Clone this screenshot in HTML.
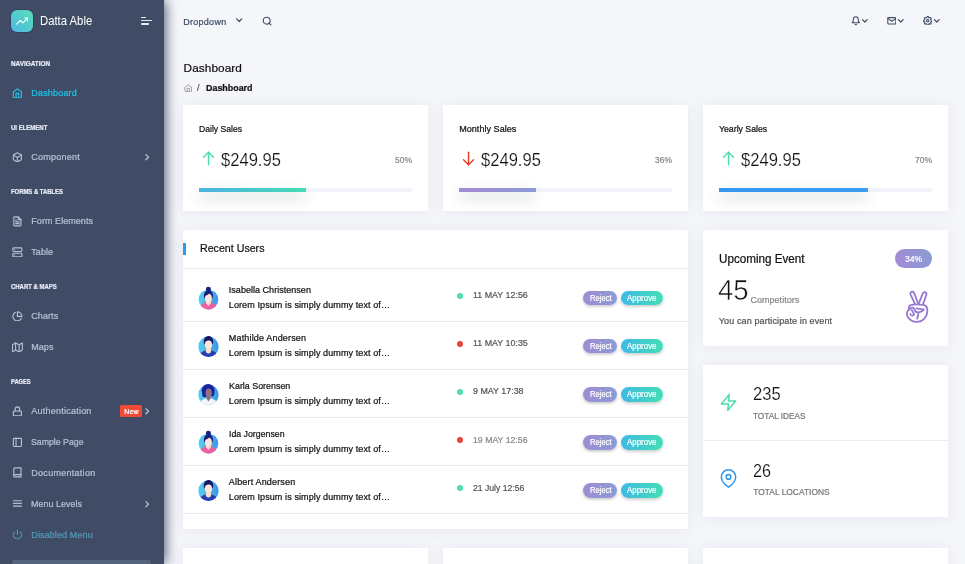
<!DOCTYPE html>
<html lang="en"><head><meta charset="utf-8"><title>Datta Able - Dashboard</title>
<style>
*{margin:0;padding:0;box-sizing:border-box}
html,body{width:965px;height:564px;overflow:hidden;background:#f5f6fa;font-family:"Liberation Sans", sans-serif;}
#app{position:relative;width:965px;height:564px;overflow:hidden;background:#f5f6fa;will-change:transform}
#app div,#app svg,#app span{position:absolute}
.t{white-space:nowrap;display:block;transform-origin:0 50%;-webkit-text-stroke:0.22px}
#side{left:0;top:0;width:164.4px;height:564px;background:#404c66;box-shadow:0.6px 0 12.4px 0 #3f4d67}
.card{background:#fff;box-shadow:0 0.6px 12.4px 0 rgba(69,80,100,.08)}
</style></head><body>
<div id="app">
<div id="side"></div>
<div class="sb" style="left:11.00px;top:9.50px;width:21.90px;height:22.40px;border-radius:6.2px;background:linear-gradient(-135deg,#5addb4 0%,#4cb9e8 100%);box-shadow:0 0 0 0.8px rgba(40,40,70,.45);"></div>
<div class="sb" style="left:141.00px;top:16.70px;width:4.80px;height:1.60px;background:#e4e8f2;border-radius:.8px;"></div>
<div class="sb" style="left:141.00px;top:19.90px;width:11.20px;height:1.60px;background:#e4e8f2;border-radius:.8px;"></div>
<div class="sb" style="left:141.00px;top:23.10px;width:8.20px;height:1.60px;background:#e4e8f2;border-radius:.8px;"></div>
<div class="sb" style="left:120.00px;top:405.30px;width:22.40px;height:11.70px;background:#ee4a38;border-radius:1.6px;"></div>
<div class="sb" style="left:11.50px;top:560.10px;width:139.50px;height:20.00px;background:#56637c;border-radius:3px;"></div>
<div class="card" style="left:183.26px;top:104.60px;width:244.74px;height:106.40px;"></div>
<div class="pl" style="left:199.16px;top:187.70px;width:213.20px;height:4.30px;background:#f2f4f9;"></div>
<div class="pl" style="left:199.16px;top:187.70px;width:106.60px;height:4.30px;background:linear-gradient(90deg,#4db2e3,#45dbb4);box-shadow:0 6.2px 12.4px rgba(69,90,100,.3);"></div>
<div class="card" style="left:443.10px;top:104.60px;width:244.74px;height:106.40px;"></div>
<div class="pl" style="left:459.00px;top:187.70px;width:213.20px;height:4.30px;background:#f2f4f9;"></div>
<div class="pl" style="left:459.00px;top:187.70px;width:76.75px;height:4.30px;background:linear-gradient(90deg,#a38ad6,#8c99d7);box-shadow:0 6.2px 12.4px rgba(69,90,100,.3);"></div>
<div class="card" style="left:703.10px;top:104.60px;width:244.74px;height:106.40px;"></div>
<div class="pl" style="left:719.00px;top:187.70px;width:213.20px;height:4.30px;background:#f2f4f9;"></div>
<div class="pl" style="left:719.00px;top:187.70px;width:149.24px;height:4.30px;background:linear-gradient(90deg,#3498ef,#3a9df0);box-shadow:0 6.2px 12.4px rgba(69,90,100,.3);"></div>
<div class="card" style="left:183.26px;top:229.70px;width:504.74px;height:299.60px;"></div>
<div class="pl" style="left:183.46px;top:243.00px;width:2.40px;height:11.80px;background:#2b9df0;"></div>
<div class="pl" style="left:183.26px;top:267.80px;width:504.74px;height:0.70px;background:#e8eaef;"></div>
<div class="pl" style="left:457.30px;top:292.55px;width:6.10px;height:6.10px;background:#52dcb0;border-radius:50%;"></div>
<div class="pl" style="left:583.40px;top:290.55px;width:33.50px;height:14.90px;border-radius:8px;background:linear-gradient(90deg,#9f8cd4,#8c9cd4);box-shadow:0 1.5px 3px rgba(0,0,0,.22);"></div>
<div class="pl" style="left:620.70px;top:290.55px;width:42.10px;height:14.90px;border-radius:8px;background:linear-gradient(90deg,#3fb9e3,#45deb4);box-shadow:0 1.5px 3px rgba(0,0,0,.22);"></div>
<div class="pl" style="left:183.26px;top:321.00px;width:504.74px;height:0.70px;background:#e8eaef;"></div>
<div class="pl" style="left:457.30px;top:340.60px;width:6.10px;height:6.10px;background:#e5433a;border-radius:50%;"></div>
<div class="pl" style="left:583.40px;top:338.60px;width:33.50px;height:14.90px;border-radius:8px;background:linear-gradient(90deg,#9f8cd4,#8c9cd4);box-shadow:0 1.5px 3px rgba(0,0,0,.22);"></div>
<div class="pl" style="left:620.70px;top:338.60px;width:42.10px;height:14.90px;border-radius:8px;background:linear-gradient(90deg,#3fb9e3,#45deb4);box-shadow:0 1.5px 3px rgba(0,0,0,.22);"></div>
<div class="pl" style="left:183.26px;top:369.05px;width:504.74px;height:0.70px;background:#e8eaef;"></div>
<div class="pl" style="left:457.30px;top:388.65px;width:6.10px;height:6.10px;background:#52dcb0;border-radius:50%;"></div>
<div class="pl" style="left:583.40px;top:386.65px;width:33.50px;height:14.90px;border-radius:8px;background:linear-gradient(90deg,#9f8cd4,#8c9cd4);box-shadow:0 1.5px 3px rgba(0,0,0,.22);"></div>
<div class="pl" style="left:620.70px;top:386.65px;width:42.10px;height:14.90px;border-radius:8px;background:linear-gradient(90deg,#3fb9e3,#45deb4);box-shadow:0 1.5px 3px rgba(0,0,0,.22);"></div>
<div class="pl" style="left:183.26px;top:417.10px;width:504.74px;height:0.70px;background:#e8eaef;"></div>
<div class="pl" style="left:457.30px;top:436.70px;width:6.10px;height:6.10px;background:#e5433a;border-radius:50%;"></div>
<div class="pl" style="left:583.40px;top:434.70px;width:33.50px;height:14.90px;border-radius:8px;background:linear-gradient(90deg,#9f8cd4,#8c9cd4);box-shadow:0 1.5px 3px rgba(0,0,0,.22);"></div>
<div class="pl" style="left:620.70px;top:434.70px;width:42.10px;height:14.90px;border-radius:8px;background:linear-gradient(90deg,#3fb9e3,#45deb4);box-shadow:0 1.5px 3px rgba(0,0,0,.22);"></div>
<div class="pl" style="left:183.26px;top:465.15px;width:504.74px;height:0.70px;background:#e8eaef;"></div>
<div class="pl" style="left:457.30px;top:484.75px;width:6.10px;height:6.10px;background:#52dcb0;border-radius:50%;"></div>
<div class="pl" style="left:583.40px;top:482.75px;width:33.50px;height:14.90px;border-radius:8px;background:linear-gradient(90deg,#9f8cd4,#8c9cd4);box-shadow:0 1.5px 3px rgba(0,0,0,.22);"></div>
<div class="pl" style="left:620.70px;top:482.75px;width:42.10px;height:14.90px;border-radius:8px;background:linear-gradient(90deg,#3fb9e3,#45deb4);box-shadow:0 1.5px 3px rgba(0,0,0,.22);"></div>
<div class="pl" style="left:183.26px;top:513.20px;width:504.74px;height:0.70px;background:#e8eaef;"></div>
<div class="card" style="left:703.10px;top:229.70px;width:244.74px;height:116.20px;"></div>
<div class="pl" style="left:894.50px;top:249.00px;width:37.20px;height:18.80px;border-radius:10px;background:linear-gradient(90deg,#a28ad4,#8c9cd4);"></div>
<div class="card" style="left:703.10px;top:364.80px;width:244.74px;height:152.20px;"></div>
<div class="pl" style="left:703.10px;top:440.30px;width:244.74px;height:0.70px;background:#eceef1;"></div>
<div class="card" style="left:183.26px;top:547.70px;width:244.74px;height:40.00px;"></div>
<div class="card" style="left:443.10px;top:547.70px;width:244.74px;height:40.00px;"></div>
<div class="card" style="left:703.10px;top:547.70px;width:244.74px;height:40.00px;"></div>
<svg class="i" style="left:196.15px;top:285.25px" width="24.9" height="24.9" viewBox="0 0 40 40"><defs><linearGradient id="bg0" x1="0" x2="1"><stop offset="0" stop-color="#56d0ee"/><stop offset="1" stop-color="#3f96e5"/></linearGradient><clipPath id="cp0"><circle cx="20" cy="23.4" r="15.8"/></clipPath></defs><circle cx="20" cy="23.4" r="15.8" fill="url(#bg0)"/><g clip-path="url(#cp0)"><ellipse cx="20" cy="38.8" rx="14.8" ry="11.4" fill="#ee5fa3"/><path d="M16.2 25.500h7.600v4l-3.800 4.400l-3.800-4.400z" fill="#fbdccb"/></g><circle cx="20" cy="6.800" r="4" fill="#1b1f7a"/><path d="M13.200 20.500c-1.600-7.400 1.800-11.800 6.800-11.800s8.400 4.400 6.800 11.800l-2 1.500h-9.600z" fill="#1b1f7a"/><ellipse cx="20" cy="20.800" rx="5.500" ry="7" fill="#fde6d8"/><path d="M14 17.500c3.500-.5 6.500-2 8-4.500c1 2 2.500 3.500 4.500 4.500c0-5-2.500-7.500-6.500-7.500s-6.500 3-6 7.500z" fill="#1b1f7a"/></svg>
<svg class="i" style="left:196.15px;top:333.30px" width="24.9" height="24.9" viewBox="0 0 40 40"><defs><linearGradient id="bg1" x1="0" x2="1"><stop offset="0" stop-color="#56d0ee"/><stop offset="1" stop-color="#3f96e5"/></linearGradient><clipPath id="cp1"><circle cx="20" cy="22" r="16.4"/></clipPath></defs><circle cx="20" cy="22" r="16.4" fill="url(#bg1)"/><g clip-path="url(#cp1)"><ellipse cx="20" cy="39" rx="15.500" ry="11.600" fill="#2a3fb0"/><path d="M15.800 25h8.400v3.600a4.200 4.200 0 0 1-8.400 0z" fill="#fbdccb"/></g><path d="M12.800 17.500c-1.500-8 2.500-12.500 7.200-12.500s8.700 4 7.200 12.500l-1.500 1h-11.400z" fill="#171a6b"/><ellipse cx="20" cy="18.600" rx="5.900" ry="7.700" fill="#fde6d8"/><path d="M13.800 15c3-3 9-4.500 12.400 0c.3-5.500-2.200-8.500-6.200-8.500s-6.700 3-6.200 8.500z" fill="#171a6b"/></svg>
<svg class="i" style="left:196.15px;top:381.35px" width="24.9" height="24.9" viewBox="0 0 40 40"><defs><linearGradient id="bg2" x1="0" x2="1"><stop offset="0" stop-color="#56d0ee"/><stop offset="1" stop-color="#3f96e5"/></linearGradient><clipPath id="cp2"><circle cx="20" cy="22" r="16.4"/></clipPath></defs><circle cx="20" cy="22" r="16.4" fill="url(#bg2)"/><g clip-path="url(#cp2)"><ellipse cx="20" cy="39" rx="15" ry="11.600" fill="#f3f5f9"/><path d="M16.800 24h6.400v4l-3.200 5l-3.200-5z" fill="#8a6f7d"/></g><ellipse cx="19.500" cy="14.800" rx="10.500" ry="9.800" fill="#1b22a0"/><ellipse cx="14.200" cy="21" rx="4.200" ry="5.200" fill="#1b22a0"/><ellipse cx="25.800" cy="19.500" rx="3.600" ry="5.200" fill="#1b22a0"/><ellipse cx="20.300" cy="19.400" rx="5" ry="7.200" fill="#8f7382"/></svg>
<svg class="i" style="left:196.15px;top:429.40px" width="24.9" height="24.9" viewBox="0 0 40 40"><defs><linearGradient id="bg3" x1="0" x2="1"><stop offset="0" stop-color="#56d0ee"/><stop offset="1" stop-color="#3f96e5"/></linearGradient><clipPath id="cp3"><circle cx="20" cy="23.4" r="15.8"/></clipPath></defs><circle cx="20" cy="23.4" r="15.8" fill="url(#bg3)"/><g clip-path="url(#cp3)"><ellipse cx="20" cy="38.8" rx="14.8" ry="11.4" fill="#ee5fa3"/><path d="M16.2 25.500h7.600v4l-3.800 4.400l-3.800-4.400z" fill="#fbdccb"/></g><circle cx="20" cy="6.800" r="4" fill="#1b1f7a"/><path d="M13.200 20.500c-1.600-7.400 1.800-11.800 6.800-11.800s8.400 4.400 6.800 11.800l-2 1.500h-9.600z" fill="#1b1f7a"/><ellipse cx="20" cy="20.800" rx="5.500" ry="7" fill="#fde6d8"/><path d="M14 17.500c3.500-.5 6.500-2 8-4.500c1 2 2.500 3.500 4.500 4.500c0-5-2.500-7.500-6.500-7.500s-6.500 3-6 7.500z" fill="#1b1f7a"/></svg>
<svg class="i" style="left:196.15px;top:477.45px" width="24.9" height="24.9" viewBox="0 0 40 40"><defs><linearGradient id="bg4" x1="0" x2="1"><stop offset="0" stop-color="#56d0ee"/><stop offset="1" stop-color="#3f96e5"/></linearGradient><clipPath id="cp4"><circle cx="20" cy="22" r="16.4"/></clipPath></defs><circle cx="20" cy="22" r="16.4" fill="url(#bg4)"/><g clip-path="url(#cp4)"><ellipse cx="20" cy="39" rx="15.500" ry="11.600" fill="#2a3fb0"/><path d="M15.800 25h8.400v3.600a4.200 4.200 0 0 1-8.400 0z" fill="#fbdccb"/></g><path d="M12.800 17.500c-1.500-8 2.500-12.500 7.200-12.500s8.700 4 7.200 12.500l-1.500 1h-11.400z" fill="#171a6b"/><ellipse cx="20" cy="18.600" rx="5.900" ry="7.700" fill="#fde6d8"/><path d="M13.800 15c3-3 9-4.500 12.400 0c.3-5.500-2.200-8.500-6.200-8.500s-6.700 3-6.200 8.500z" fill="#171a6b"/></svg>
<svg class="i" style="left:16.30px;top:14.50px;" width="12.2" height="12.2" viewBox="0 0 24 24" fill="none" stroke="#fff" stroke-width="2.1" stroke-linecap="round" stroke-linejoin="round"><polyline points="23 6 13.5 15.5 8.5 10.5 1 18"/><polyline points="17 6 23 6 23 12"/></svg>
<svg class="i" style="left:11.90px;top:87.50px;" width="10.8" height="10.8" viewBox="0 0 24 24" fill="none" stroke="#1dc4e9" stroke-width="2.5" stroke-linecap="round" stroke-linejoin="round"><path d="M3 9l9-7 9 7v11a2 2 0 0 1-2 2H5a2 2 0 0 1-2-2z"/><polyline points="9 22 9 12 15 12 15 22"/></svg>
<svg class="i" style="left:11.90px;top:151.50px;" width="10.8" height="10.8" viewBox="0 0 24 24" fill="none" stroke="#b4c0d7" stroke-width="2.5" stroke-linecap="round" stroke-linejoin="round"><path d="M21 16V8a2 2 0 0 0-1-1.73l-7-4a2 2 0 0 0-2 0l-7 4A2 2 0 0 0 3 8v8a2 2 0 0 0 1 1.73l7 4a2 2 0 0 0 2 0l7-4A2 2 0 0 0 21 16z"/><polyline points="3.27 6.96 12 12.01 20.73 6.96"/><line x1="12" y1="22.08" x2="12" y2="12"/></svg>
<svg class="i" style="left:141.90px;top:151.90px;" width="10.4" height="10.4" viewBox="0 0 24 24" fill="none" stroke="#b4c0d7" stroke-width="3" stroke-linecap="round" stroke-linejoin="round"><polyline points="9 18 15 12 9 6"/></svg>
<svg class="i" style="left:11.90px;top:215.80px;" width="10.8" height="10.8" viewBox="0 0 24 24" fill="none" stroke="#b4c0d7" stroke-width="2.5" stroke-linecap="round" stroke-linejoin="round"><path d="M14 2H6a2 2 0 0 0-2 2v16a2 2 0 0 0 2 2h12a2 2 0 0 0 2-2V8z"/><polyline points="14 2 14 8 20 8"/><line x1="16" y1="13" x2="8" y2="13"/><line x1="16" y1="17" x2="8" y2="17"/><polyline points="10 9 9 9 8 9"/></svg>
<svg class="i" style="left:11.90px;top:246.60px;" width="10.8" height="10.8" viewBox="0 0 24 24" fill="none" stroke="#b4c0d7" stroke-width="2.5" stroke-linecap="round" stroke-linejoin="round"><rect x="2" y="2" width="20" height="8" rx="2" ry="2"/><rect x="2" y="14" width="20" height="8" rx="2" ry="2"/><line x1="6" y1="6" x2="6.01" y2="6"/><line x1="6" y1="18" x2="6.01" y2="18"/></svg>
<svg class="i" style="left:11.90px;top:310.50px;" width="10.8" height="10.8" viewBox="0 0 24 24" fill="none" stroke="#b4c0d7" stroke-width="2.5" stroke-linecap="round" stroke-linejoin="round"><path d="M21.21 15.89A10 10 0 1 1 8 2.83"/><path d="M22 12A10 10 0 0 0 12 2v10z"/></svg>
<svg class="i" style="left:11.90px;top:341.50px;" width="10.8" height="10.8" viewBox="0 0 24 24" fill="none" stroke="#b4c0d7" stroke-width="2.5" stroke-linecap="round" stroke-linejoin="round"><polygon points="1 6 1 22 8 18 16 22 23 18 23 2 16 6 8 2 1 6"/><line x1="8" y1="2" x2="8" y2="18"/><line x1="16" y1="6" x2="16" y2="22"/></svg>
<svg class="i" style="left:11.90px;top:405.50px;" width="10.8" height="10.8" viewBox="0 0 24 24" fill="none" stroke="#b4c0d7" stroke-width="2.5" stroke-linecap="round" stroke-linejoin="round"><rect x="3" y="11" width="18" height="11" rx="2" ry="2"/><path d="M7 11V7a5 5 0 0 1 10 0v4"/></svg>
<svg class="i" style="left:141.90px;top:405.90px;" width="10.4" height="10.4" viewBox="0 0 24 24" fill="none" stroke="#b4c0d7" stroke-width="3" stroke-linecap="round" stroke-linejoin="round"><polyline points="9 18 15 12 9 6"/></svg>
<svg class="i" style="left:11.90px;top:436.80px;" width="10.8" height="10.8" viewBox="0 0 24 24" fill="none" stroke="#b4c0d7" stroke-width="2.5" stroke-linecap="round" stroke-linejoin="round"><rect x="3" y="3" width="18" height="18" rx="2" ry="2"/><line x1="9" y1="3" x2="9" y2="21"/></svg>
<svg class="i" style="left:11.90px;top:467.40px;" width="10.8" height="10.8" viewBox="0 0 24 24" fill="none" stroke="#b4c0d7" stroke-width="2.5" stroke-linecap="round" stroke-linejoin="round"><path d="M4 19.5A2.5 2.5 0 0 1 6.5 17H20"/><path d="M6.5 2H20v20H6.5A2.5 2.5 0 0 1 4 19.5v-15A2.5 2.5 0 0 1 6.5 2z"/></svg>
<svg class="i" style="left:11.90px;top:498.40px;" width="10.8" height="10.8" viewBox="0 0 24 24" fill="none" stroke="#b4c0d7" stroke-width="2.5" stroke-linecap="round" stroke-linejoin="round"><line x1="3" y1="12" x2="21" y2="12"/><line x1="3" y1="6" x2="21" y2="6"/><line x1="3" y1="18" x2="21" y2="18"/></svg>
<svg class="i" style="left:141.90px;top:498.80px;" width="10.4" height="10.4" viewBox="0 0 24 24" fill="none" stroke="#b4c0d7" stroke-width="3" stroke-linecap="round" stroke-linejoin="round"><polyline points="9 18 15 12 9 6"/></svg>
<svg class="i" style="left:11.90px;top:529.20px;" width="10.8" height="10.8" viewBox="0 0 24 24" fill="none" stroke="#4f9ab8" stroke-width="2.5" stroke-linecap="round" stroke-linejoin="round"><path d="M18.36 6.64a9 9 0 1 1-12.73 0"/><line x1="12" y1="2" x2="12" y2="12"/></svg>
<svg class="i" style="left:233.50px;top:15.40px;" width="10.4" height="10.4" viewBox="0 0 24 24" fill="none" stroke="#3f4d67" stroke-width="2.9" stroke-linecap="round" stroke-linejoin="round"><polyline points="6 9 12 15 18 9"/></svg>
<svg class="i" style="left:261.50px;top:15.90px;" width="10.2" height="10.2" viewBox="0 0 24 24" fill="none" stroke="#3f4d67" stroke-width="2.7" stroke-linecap="round" stroke-linejoin="round"><circle cx="11" cy="11" r="8"/><line x1="21" y1="21" x2="16.65" y2="16.65"/></svg>
<svg class="i" style="left:851.00px;top:16.10px;" width="9.6" height="9.6" viewBox="0 0 24 24" fill="none" stroke="#3f4d67" stroke-width="2.7" stroke-linecap="round" stroke-linejoin="round"><path d="M18 8A6 6 0 0 0 6 8c0 7-3 9-3 9h18s-3-2-3-9"/><path d="M13.73 21a2 2 0 0 1-3.46 0"/></svg>
<svg class="i" style="left:860.30px;top:15.70px;" width="9.6" height="9.6" viewBox="0 0 24 24" fill="none" stroke="#3f4d67" stroke-width="3.1" stroke-linecap="round" stroke-linejoin="round"><polyline points="6 9 12 15 18 9"/></svg>
<svg class="i" style="left:886.70px;top:15.70px;" width="9.6" height="9.6" viewBox="0 0 24 24" fill="none" stroke="#3f4d67" stroke-width="2.7" stroke-linecap="round" stroke-linejoin="round"><path d="M4 4h16c1.1 0 2 .9 2 2v12c0 1.1-.9 2-2 2H4c-1.1 0-2-.9-2-2V6c0-1.1.9-2 2-2z"/><polyline points="22,6 12,13 2,6"/></svg>
<svg class="i" style="left:896.00px;top:15.70px;" width="9.6" height="9.6" viewBox="0 0 24 24" fill="none" stroke="#3f4d67" stroke-width="3.1" stroke-linecap="round" stroke-linejoin="round"><polyline points="6 9 12 15 18 9"/></svg>
<svg class="i" style="left:922.60px;top:15.90px;" width="9.6" height="9.6" viewBox="0 0 24 24" fill="none" stroke="#3f4d67" stroke-width="2.7" stroke-linecap="round" stroke-linejoin="round"><circle cx="12" cy="12" r="3"/><path d="M19.4 15a1.65 1.65 0 0 0 .33 1.82l.06.06a2 2 0 0 1 0 2.83 2 2 0 0 1-2.83 0l-.06-.06a1.65 1.65 0 0 0-1.82-.33 1.65 1.65 0 0 0-1 1.51V21a2 2 0 0 1-2 2 2 2 0 0 1-2-2v-.09A1.65 1.65 0 0 0 9 19.4a1.65 1.65 0 0 0-1.82.33l-.06.06a2 2 0 0 1-2.83 0 2 2 0 0 1 0-2.83l.06-.06a1.65 1.65 0 0 0 .33-1.82 1.65 1.65 0 0 0-1.51-1H3a2 2 0 0 1-2-2 2 2 0 0 1 2-2h.09A1.65 1.65 0 0 0 4.6 9a1.65 1.65 0 0 0-.33-1.82l-.06-.06a2 2 0 0 1 0-2.83 2 2 0 0 1 2.83 0l.06.06a1.65 1.65 0 0 0 1.82.33H9a1.65 1.65 0 0 0 1-1.51V3a2 2 0 0 1 2-2 2 2 0 0 1 2 2v.09a1.65 1.65 0 0 0 1 1.51 1.65 1.65 0 0 0 1.82-.33l.06-.06a2 2 0 0 1 2.83 0 2 2 0 0 1 0 2.83l-.06.06a1.65 1.65 0 0 0-.33 1.82V9a1.65 1.65 0 0 0 1.51 1H21a2 2 0 0 1 2 2 2 2 0 0 1-2 2h-.09a1.65 1.65 0 0 0-1.51 1z"/></svg>
<svg class="i" style="left:931.90px;top:15.70px;" width="9.6" height="9.6" viewBox="0 0 24 24" fill="none" stroke="#3f4d67" stroke-width="3.1" stroke-linecap="round" stroke-linejoin="round"><polyline points="6 9 12 15 18 9"/></svg>
<svg class="i" style="left:183.70px;top:83.80px;" width="8.6" height="8.6" viewBox="0 0 24 24" fill="none" stroke="#777" stroke-width="1.8" stroke-linecap="round" stroke-linejoin="round"><path d="M3 9l9-7 9 7v11a2 2 0 0 1-2 2H5a2 2 0 0 1-2-2z"/><polyline points="9 22 9 12 15 12 15 22"/></svg>
<svg class="i" style="left:199.96px;top:150.15px;" width="17.1" height="17.1" viewBox="0 0 24 24" fill="none" stroke="#4cdcb0" stroke-width="2.0" stroke-linecap="round" stroke-linejoin="round"><line x1="12" y1="20.8" x2="12" y2="3.2"/><polyline points="5 10.2 12 3.2 19 10.2"/></svg>
<svg class="i" style="left:459.80px;top:150.15px;" width="17.1" height="17.1" viewBox="0 0 24 24" fill="none" stroke="#e53c2b" stroke-width="2.0" stroke-linecap="round" stroke-linejoin="round"><line x1="12" y1="3.2" x2="12" y2="20.8"/><polyline points="19 13.8 12 20.8 5 13.8"/></svg>
<svg class="i" style="left:719.80px;top:150.15px;" width="17.1" height="17.1" viewBox="0 0 24 24" fill="none" stroke="#4cdcb0" stroke-width="2.0" stroke-linecap="round" stroke-linejoin="round"><line x1="12" y1="20.8" x2="12" y2="3.2"/><polyline points="5 10.2 12 3.2 19 10.2"/></svg>
<svg class="i" style="left:718.60px;top:392.90px;" width="19.0" height="19.0" viewBox="0 0 24 24" fill="none" stroke="#4cdcb0" stroke-width="1.9" stroke-linecap="round" stroke-linejoin="round"><polygon points="13 2 3 14 12 14 11 22 21 10 12 10 13 2"/></svg>
<svg class="i" style="left:718.50px;top:468.60px;" width="19.0" height="19.0" viewBox="0 0 24 24" fill="none" stroke="#2f97f1" stroke-width="1.9" stroke-linecap="round" stroke-linejoin="round"><path d="M21 10c0 7-9 13-9 13s-9-6-9-13a9 9 0 0 1 18 0z"/><circle cx="12" cy="10" r="3"/></svg>
<svg class="i" style="left:898px;top:284px" width="38" height="46" viewBox="0 0 466 564" fill="none" stroke="#9478d3" stroke-width="22" stroke-linecap="round" stroke-linejoin="round">
<path d="M207 243L153 128C140 96 186 82 198 112L246 236"/>
<path d="M256 238L303 118C316 88 360 102 348 132L306 250"/>
<path d="M165 257C128 262 124 298 142 310C102 330 100 382 126 412C152 450 192 468 236 465C302 462 356 410 360 332C362 292 346 264 312 257L218 250C192 248 178 254 165 257Z"/>
<path d="M142 310C152 288 182 284 196 302L216 338"/>
<path d="M168 318L198 372C188 392 160 392 150 368"/>
<path d="M226 300L318 313C300 332 272 346 250 350C252 380 246 402 234 424"/>
<path d="M250 350L216 338"/>
</svg>
<span class="t" id="t0" style="left:39.70px;top:14.00px;font-size:12.2px;line-height:14.64px;color:#fff;transform:scaleX(0.9280);-webkit-text-stroke:0;">Datta Able</span>
<span class="t" id="t1" style="left:11.00px;top:60.00px;font-size:6.8px;line-height:8.16px;color:#e8edf7;font-weight:700;transform:scaleX(0.9359);">NAVIGATION</span>
<span class="t" id="t2" style="left:11.00px;top:124.00px;font-size:6.8px;line-height:8.16px;color:#e8edf7;font-weight:700;transform:scaleX(0.8817);">UI ELEMENT</span>
<span class="t" id="t3" style="left:11.00px;top:188.00px;font-size:6.8px;line-height:8.16px;color:#e8edf7;font-weight:700;transform:scaleX(0.8678);">FORMS &amp; TABLES</span>
<span class="t" id="t4" style="left:11.00px;top:283.00px;font-size:6.8px;line-height:8.16px;color:#e8edf7;font-weight:700;transform:scaleX(0.8770);">CHART &amp; MAPS</span>
<span class="t" id="t5" style="left:11.00px;top:378.00px;font-size:6.8px;line-height:8.16px;color:#e8edf7;font-weight:700;transform:scaleX(0.8413);">PAGES</span>
<span class="t" id="t6" style="left:31.30px;top:88.00px;font-size:9.0px;line-height:10.80px;color:#1dc4e9;letter-spacing:0.184px;">Dashboard</span>
<span class="t" id="t7" style="left:31.30px;top:152.00px;font-size:9.0px;line-height:10.80px;color:#b4c0d7;letter-spacing:0.232px;">Component</span>
<span class="t" id="t8" style="left:31.30px;top:216.00px;font-size:9.0px;line-height:10.80px;color:#b4c0d7;letter-spacing:0.057px;">Form Elements</span>
<span class="t" id="t9" style="left:31.30px;top:247.00px;font-size:9.0px;line-height:10.80px;color:#b4c0d7;letter-spacing:0.069px;">Table</span>
<span class="t" id="t10" style="left:31.30px;top:311.00px;font-size:9.0px;line-height:10.80px;color:#b4c0d7;letter-spacing:0.077px;">Charts</span>
<span class="t" id="t11" style="left:31.30px;top:342.00px;font-size:9.0px;line-height:10.80px;color:#b4c0d7;letter-spacing:0.026px;">Maps</span>
<span class="t" id="t12" style="left:31.30px;top:406.00px;font-size:9.0px;line-height:10.80px;color:#b4c0d7;letter-spacing:0.234px;">Authentication</span>
<span class="t" id="t13" style="left:124.30px;top:408.00px;font-size:6.9px;line-height:8.28px;color:#fff;letter-spacing:0.151px;">New</span>
<span class="t" id="t14" style="left:31.30px;top:437.00px;font-size:9.0px;line-height:10.80px;color:#b4c0d7;transform:scaleX(0.9714);">Sample Page</span>
<span class="t" id="t15" style="left:31.30px;top:468.00px;font-size:9.0px;line-height:10.80px;color:#b4c0d7;letter-spacing:0.279px;">Documentation</span>
<span class="t" id="t16" style="left:31.30px;top:499.00px;font-size:9.0px;line-height:10.80px;color:#b4c0d7;transform:scaleX(0.9994);">Menu Levels</span>
<span class="t" id="t17" style="left:31.30px;top:530.00px;font-size:9.0px;line-height:10.80px;color:#4f9ab8;letter-spacing:0.113px;">Disabled Menu</span>
<span class="t" id="t18" style="left:183.20px;top:17.00px;font-size:9.0px;line-height:10.80px;color:#3f4d67;letter-spacing:0.281px;">Dropdown</span>
<span class="t" id="t19" style="left:183.60px;top:61.00px;font-size:11.8px;line-height:14.16px;color:#111;letter-spacing:0.073px;">Dashboard</span>
<span class="t" id="t20" style="left:197.00px;top:83.00px;font-size:9.0px;line-height:10.80px;color:#555;">/</span>
<span class="t" id="t21" style="left:205.60px;top:83.00px;font-size:9.0px;line-height:10.80px;color:#111;font-weight:700;transform:scaleX(0.9890);">Dashboard</span>
<span class="t" id="t22" style="left:199.36px;top:124.00px;font-size:9.0px;line-height:10.80px;color:#111;transform:scaleX(0.9571);">Daily Sales</span>
<span class="t" id="t23" style="left:221.16px;top:150.00px;font-size:17.6px;line-height:21.12px;color:#111;transform:scaleX(0.9417);-webkit-text-stroke:0.18px #fff;">$249.95</span>
<span class="t" id="t24" style="left:394.96px;top:155.00px;font-size:9.0px;line-height:10.80px;color:#888;transform:scaleX(0.9381);">50%</span>
<span class="t" id="t25" style="left:459.20px;top:124.00px;font-size:9.0px;line-height:10.80px;color:#111;letter-spacing:0.047px;">Monthly Sales</span>
<span class="t" id="t26" style="left:481.00px;top:150.00px;font-size:17.6px;line-height:21.12px;color:#111;transform:scaleX(0.9417);-webkit-text-stroke:0.18px #fff;">$249.95</span>
<span class="t" id="t27" style="left:654.80px;top:155.00px;font-size:9.0px;line-height:10.80px;color:#888;transform:scaleX(0.9381);">36%</span>
<span class="t" id="t28" style="left:719.20px;top:124.00px;font-size:9.0px;line-height:10.80px;color:#111;transform:scaleX(0.9698);">Yearly Sales</span>
<span class="t" id="t29" style="left:741.00px;top:150.00px;font-size:17.6px;line-height:21.12px;color:#111;transform:scaleX(0.9417);-webkit-text-stroke:0.18px #fff;">$249.95</span>
<span class="t" id="t30" style="left:914.80px;top:155.00px;font-size:9.0px;line-height:10.80px;color:#888;transform:scaleX(0.9381);">70%</span>
<span class="t" id="t31" style="left:199.70px;top:242.00px;font-size:10.9px;line-height:13.08px;color:#111;transform:scaleX(0.9775);">Recent Users</span>
<span class="t" id="t32" style="left:228.80px;top:285.00px;font-size:9.0px;line-height:10.80px;color:#111;letter-spacing:0.029px;">Isabella Christensen</span>
<span class="t" id="t33" style="left:228.80px;top:300.00px;font-size:9.0px;line-height:10.80px;color:#111;letter-spacing:0.104px;">Lorem Ipsum is simply dummy text of…</span>
<span class="t" id="t34" style="left:473.20px;top:290.00px;font-size:9.3px;line-height:11.16px;color:#555;transform:scaleX(0.9551);">11 MAY 12:56</span>
<span class="t" id="t35" style="left:589.50px;top:293.00px;font-size:8.5px;line-height:10.20px;color:#fff;transform:scaleX(0.8965);">Reject</span>
<span class="t" id="t36" style="left:626.80px;top:293.00px;font-size:8.5px;line-height:10.20px;color:#fff;transform:scaleX(0.9314);">Approve</span>
<span class="t" id="t37" style="left:228.80px;top:333.00px;font-size:9.0px;line-height:10.80px;color:#111;letter-spacing:0.165px;">Mathilde Andersen</span>
<span class="t" id="t38" style="left:228.80px;top:348.00px;font-size:9.0px;line-height:10.80px;color:#111;letter-spacing:0.104px;">Lorem Ipsum is simply dummy text of…</span>
<span class="t" id="t39" style="left:473.20px;top:338.00px;font-size:9.3px;line-height:11.16px;color:#555;transform:scaleX(0.9551);">11 MAY 10:35</span>
<span class="t" id="t40" style="left:589.50px;top:341.00px;font-size:8.5px;line-height:10.20px;color:#fff;transform:scaleX(0.8965);">Reject</span>
<span class="t" id="t41" style="left:626.80px;top:341.00px;font-size:8.5px;line-height:10.20px;color:#fff;transform:scaleX(0.9314);">Approve</span>
<span class="t" id="t42" style="left:228.80px;top:381.00px;font-size:9.0px;line-height:10.80px;color:#111;transform:scaleX(0.9880);">Karla Sorensen</span>
<span class="t" id="t43" style="left:228.80px;top:396.00px;font-size:9.0px;line-height:10.80px;color:#111;letter-spacing:0.104px;">Lorem Ipsum is simply dummy text of…</span>
<span class="t" id="t44" style="left:473.20px;top:386.00px;font-size:9.3px;line-height:11.16px;color:#555;transform:scaleX(0.9548);">9 MAY 17:38</span>
<span class="t" id="t45" style="left:589.50px;top:389.00px;font-size:8.5px;line-height:10.20px;color:#fff;transform:scaleX(0.8965);">Reject</span>
<span class="t" id="t46" style="left:626.80px;top:389.00px;font-size:8.5px;line-height:10.20px;color:#fff;transform:scaleX(0.9314);">Approve</span>
<span class="t" id="t47" style="left:228.80px;top:429.00px;font-size:9.0px;line-height:10.80px;color:#111;transform:scaleX(0.9729);">Ida Jorgensen</span>
<span class="t" id="t48" style="left:228.80px;top:444.00px;font-size:9.0px;line-height:10.80px;color:#111;letter-spacing:0.104px;">Lorem Ipsum is simply dummy text of…</span>
<span class="t" id="t49" style="left:473.20px;top:435.00px;font-size:9.3px;line-height:11.16px;color:#888;transform:scaleX(0.9386);">19 MAY 12:56</span>
<span class="t" id="t50" style="left:589.50px;top:437.00px;font-size:8.5px;line-height:10.20px;color:#fff;transform:scaleX(0.8965);">Reject</span>
<span class="t" id="t51" style="left:626.80px;top:437.00px;font-size:8.5px;line-height:10.20px;color:#fff;transform:scaleX(0.9314);">Approve</span>
<span class="t" id="t52" style="left:228.80px;top:477.00px;font-size:9.0px;line-height:10.80px;color:#111;letter-spacing:0.168px;">Albert Andersen</span>
<span class="t" id="t53" style="left:228.80px;top:492.00px;font-size:9.0px;line-height:10.80px;color:#111;letter-spacing:0.104px;">Lorem Ipsum is simply dummy text of…</span>
<span class="t" id="t54" style="left:473.20px;top:483.00px;font-size:9.3px;line-height:11.16px;color:#555;transform:scaleX(0.9275);">21 July 12:56</span>
<span class="t" id="t55" style="left:589.50px;top:485.00px;font-size:8.5px;line-height:10.20px;color:#fff;transform:scaleX(0.8965);">Reject</span>
<span class="t" id="t56" style="left:626.80px;top:485.00px;font-size:8.5px;line-height:10.20px;color:#fff;transform:scaleX(0.9314);">Approve</span>
<span class="t" id="t57" style="left:718.90px;top:252.00px;font-size:11.9px;line-height:14.28px;color:#111;transform:scaleX(0.9811);">Upcoming Event</span>
<span class="t" id="t58" style="left:904.60px;top:254.00px;font-size:9.0px;line-height:10.80px;color:#fff;transform:scaleX(0.9547);">34%</span>
<span class="t" id="t59" style="left:717.90px;top:272.00px;font-size:30.0px;line-height:36.00px;color:#111;transform:scaleX(0.9169);-webkit-text-stroke:0.6px #fff;">45</span>
<span class="t" id="t60" style="left:750.40px;top:295.00px;font-size:9.0px;line-height:10.80px;color:#888;letter-spacing:0.038px;">Competitors</span>
<span class="t" id="t61" style="left:718.80px;top:316.00px;font-size:9.0px;line-height:10.80px;color:#555;letter-spacing:0.113px;">You can participate in event</span>
<span class="t" id="t62" style="left:753.00px;top:384.00px;font-size:17.6px;line-height:21.12px;color:#111;transform:scaleX(0.9401);-webkit-text-stroke:0.18px #fff;">235</span>
<span class="t" id="t63" style="left:753.20px;top:411.00px;font-size:8.4px;line-height:10.08px;color:#777;transform:scaleX(0.9817);">TOTAL IDEAS</span>
<span class="t" id="t64" style="left:753.00px;top:461.00px;font-size:17.6px;line-height:21.12px;color:#111;transform:scaleX(0.9194);-webkit-text-stroke:0.18px #fff;">26</span>
<span class="t" id="t65" style="left:753.20px;top:487.00px;font-size:8.4px;line-height:10.08px;color:#777;letter-spacing:0.035px;">TOTAL LOCATIONS</span>
</div>
</body></html>
